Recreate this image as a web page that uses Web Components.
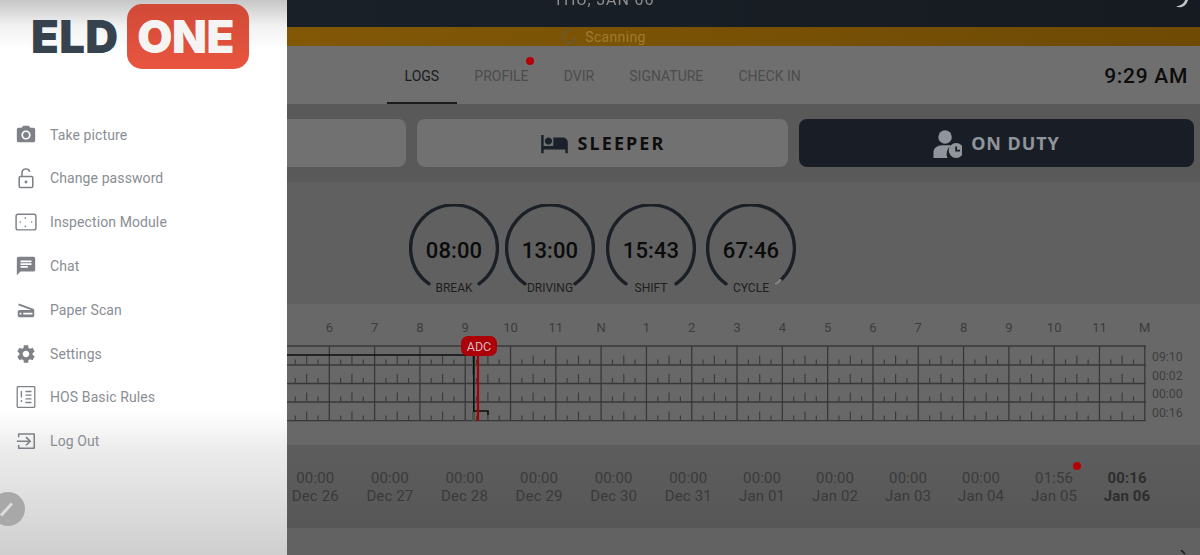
<!DOCTYPE html>
<html><head><meta charset="utf-8">
<style>
html,body{margin:0;padding:0;width:1200px;height:555px;overflow:hidden;background:#666;font-family:Roboto,"Liberation Sans",sans-serif}
eld-app{width:1200px;height:555px}
</style></head><body>
<eld-app>
  <eld-drawer slot="drawer">
    <eld-item label="Take picture" icon="camera"></eld-item>
    <eld-item label="Change password" icon="lock"></eld-item>
    <eld-item label="Inspection Module" icon="inspect"></eld-item>
    <eld-item label="Chat" icon="chat"></eld-item>
    <eld-item label="Paper Scan" icon="scan"></eld-item>
    <eld-item label="Settings" icon="gear"></eld-item>
    <eld-item label="HOS Basic Rules" icon="rules"></eld-item>
    <eld-item label="Log Out" icon="logout"></eld-item>
  </eld-drawer>
  <eld-status></eld-status>
  <eld-tabs time="9:29 AM">
    <eld-tab active>LOGS</eld-tab>
    <eld-tab dot>PROFILE</eld-tab>
    <eld-tab>DVIR</eld-tab>
    <eld-tab>SIGNATURE</eld-tab>
    <eld-tab>CHECK IN</eld-tab>
  </eld-tabs>
  <eld-duties>
    <eld-duty w="119"></eld-duty>
    <eld-duty w="371" icon="bed">SLEEPER</eld-duty>
    <eld-duty w="395" icon="duty" dark>ON DUTY</eld-duty>
  </eld-duties>
  <eld-gauges>
    <eld-gauge time="08:00" label="BREAK" style="margin-left:122px"></eld-gauge>
    <eld-gauge time="13:00" label="DRIVING" style="margin-left:6px"></eld-gauge>
    <eld-gauge time="15:43" label="SHIFT" style="margin-left:11px"></eld-gauge>
    <eld-gauge time="67:46" label="CYCLE" style="margin-left:10px" fade></eld-gauge>
  </eld-gauges>
  <eld-chart></eld-chart>
  <eld-dates>
    <eld-date w="74.6" t="00:00" d="Dec 26"></eld-date>
    <eld-date w="74.6" t="00:00" d="Dec 27"></eld-date>
    <eld-date w="74.6" t="00:00" d="Dec 28"></eld-date>
    <eld-date w="74.6" t="00:00" d="Dec 29"></eld-date>
    <eld-date w="74.6" t="00:00" d="Dec 30"></eld-date>
    <eld-date w="74.6" t="00:00" d="Dec 31"></eld-date>
    <eld-date w="73" t="00:00" d="Jan 01"></eld-date>
    <eld-date w="73" t="00:00" d="Jan 02"></eld-date>
    <eld-date w="73" t="00:00" d="Jan 03"></eld-date>
    <eld-date w="73" t="00:00" d="Jan 04"></eld-date>
    <eld-date w="73" t="01:56" d="Jan 05" dot></eld-date>
    <eld-date w="73" t="00:16" d="Jan 06" bold></eld-date>
  </eld-dates>
  <eld-foot></eld-foot>
</eld-app>
<script>
const ICONS={
camera:'<path fill="currentColor" d="M9 2L7.17 4H4c-1.1 0-2 .9-2 2v12c0 1.1.9 2 2 2h16c1.1 0 2-.9 2-2V6c0-1.1-.9-2-2-2h-3.17L15 2H9zm3 15c-2.76 0-5-2.24-5-5s2.24-5 5-5 5 2.24 5 5-2.24 5-5 5z"/><circle fill="currentColor" cx="12" cy="12" r="3.2"/>',
lock:'<g fill="none" stroke="currentColor" stroke-width="1.7"><rect x="4.6" y="10.4" width="14.8" height="12" rx="1.4"/><path d="M7.6 10.2V6.400a4.400 4.400 0 0 1 8.600-1.200"/></g><circle fill="currentColor" cx="12" cy="16.4" r="1.6"/>',
inspect:'<rect x="1.2" y="3.6" width="21.6" height="17" rx="2" fill="none" stroke="currentColor" stroke-width="1.6"/><g fill="currentColor"><circle cx="5.8" cy="12" r=".9"/><circle cx="11.3" cy="7.8" r=".9"/><circle cx="18.2" cy="12" r=".9"/><circle cx="11.3" cy="16.8" r=".9"/></g>',
chat:'<path fill="currentColor" d="M20 2H4c-1.1 0-1.99.9-1.99 2L2 22l4-4h14c1.1 0 2-.9 2-2V4c0-1.1-.9-2-2-2zM6 9h12v2H6V9zm8 5H6v-2h8v2zm4-6H6V6h12v2z"/>',
scan:'<path fill="currentColor" d="M19.8 10.7L4.2 5l-.7 1.9L17.6 12H5c-1.1 0-2 .9-2 2v4c0 1.1.9 2 2 2h14c1.1 0 2-.9 2-2v-5.5c0-.8-.5-1.6-1.2-1.8zM7 17H5v-2h2v2zm12 0H9v-2h10v2z"/>',
gear:'<path fill="currentColor" d="M19.14 12.94c.04-.3.06-.61.06-.94 0-.32-.02-.64-.07-.94l2.03-1.58c.18-.14.23-.41.12-.61l-1.92-3.32c-.12-.22-.37-.29-.59-.22l-2.39.96c-.5-.38-1.03-.7-1.62-.94l-.36-2.54c-.04-.24-.24-.41-.48-.41h-3.84c-.24 0-.43.17-.47.41l-.36 2.54c-.59.24-1.13.57-1.62.94l-2.39-.96c-.22-.08-.47 0-.59.22L2.74 8.87c-.12.21-.08.47.12.61l2.03 1.58c-.05.3-.09.63-.09.94s.02.64.07.94l-2.03 1.58c-.18.14-.23.41-.12.61l1.92 3.32c.12.22.37.29.59.22l2.39-.96c.5.38 1.03.7 1.62.94l.36 2.54c.05.24.24.41.48.41h3.84c.24 0 .44-.17.47-.41l.36-2.54c.59-.24 1.13-.56 1.62-.94l2.39.96c.22.08.47 0 .59-.22l1.92-3.32c.12-.22.07-.47-.12-.61l-2.01-1.58zM12 15.6c-1.98 0-3.6-1.62-3.6-3.6s1.62-3.6 3.6-3.6 3.6 1.62 3.6 3.6-1.62 3.6-3.6 3.6z"/>',
rules:'<rect x="2.4" y=".6" width="19.2" height="22.8" rx="1.4" fill="none" stroke="currentColor" stroke-width="1.4"/><path d="M7 5.500v7M7 15.400v2M11.400 6h6.600M11.400 10h6.600M11.400 14h6.600M11.400 18h6.600" fill="none" stroke="currentColor" stroke-width="1.5"/>',
logout:'<path d="M4 8V4.400h17v15.600H4v-3.600" fill="none" stroke="currentColor" stroke-width="1.7" stroke-linejoin="round"/><path d="M2 12.200h14M12 7.800l4.600 4.400-4.600 4.400" fill="none" stroke="currentColor" stroke-width="1.7"/>',
bed:'<path fill="currentColor" d="M7 13c1.66 0 3-1.34 3-3S8.66 7 7 7s-3 1.34-3 3 1.34 3 3 3zm12-6h-8v7H3V5H1v15h2v-3h18v3h2v-9c0-2.21-1.79-4-4-4z"/>',
duty:'<g fill="currentColor"><circle cx="10" cy="6.600" r="5.600"/><path d="M.4 24v-4.600c0-3.600 3-6 7.400-6h5c.9 0 1.700.1 2.400.3A8 8 0 0 0 12 24z"/><path fill-rule="evenodd" d="M19.200 11.600a6.200 6.200 0 1 1 0 12.400 6.200 6.200 0 0 1 0-12.400zm-.8 2.800v4.200h4v-1.400h-2.500v-2.800z"/></g>'
};
function def(name,css,html,init){
  customElements.define(name,class extends HTMLElement{
    constructor(){super();this.attachShadow({mode:'open'})}
    connectedCallback(){
      const h=typeof html==='function'?html(this):html;
      this.shadowRoot.innerHTML='<style>'+css+'</style>'+h;
      if(init)init(this);
    }
  });
}
def('eld-app',`:host{display:flex;position:relative;overflow:hidden;filter:blur(.45px)}
.main{flex:1;min-width:0;display:flex;flex-direction:column}
.side{flex:none;width:287px;display:flex}`,
`<div class="side"><slot name="drawer"></slot></div><div class="main"><slot></slot></div>`);

def('eld-drawer',`:host{display:flex;flex-direction:column;width:287px;height:555px;position:relative;
 background:linear-gradient(180deg,#c6c6c6 0,#f2f2f2 26px,#fff 50px,#fff 410px,#ececec 450px,#cfcfcf 555px);color:#8f9399}
.logo{height:112.700px;flex:none;display:flex;align-items:flex-start;font-family:Inter,"Liberation Sans",sans-serif;font-weight:900;font-size:45.500px;line-height:1}
.eld{margin:14px 0 0 31px;width:96px;color:#36434e;letter-spacing:.3px}
.one{margin-top:4px;width:122px;height:65px;box-sizing:border-box;padding-right:5px;border-radius:15px;background:linear-gradient(180deg,#d04a37,#e9553f);color:#f6f4f2;text-align:center;line-height:65px;letter-spacing:-.6px}
.fab{position:absolute;left:-9px;top:492px;width:34px;height:34px;border-radius:50%;background:#a8a8a8}
svg{display:block}`,
`<div class="logo"><div class="eld">ELD</div><div class="one">ONE</div></div><slot></slot>
<div class="fab"><svg width="34" height="34" viewBox="0 0 34 34"><path d="M10 23.500L21 11.500" stroke="#dcdcdc" stroke-width="3" fill="none"/></svg></div>`);

def('eld-item',`:host{display:flex;align-items:center;height:43.800px;flex:none;font-size:14px;letter-spacing:.1px;color:#8a8e94}
.ic{width:22px;height:22px;margin-left:15px;margin-right:13px;flex:none;color:#7e8288}
svg{display:block;width:22px;height:22px}`,
el=>`<div class="ic"><svg viewBox="0 0 24 24">${ICONS[el.getAttribute('icon')]}</svg></div><span>${el.getAttribute('label')}</span>`);

def('eld-status',`:host{display:block;flex:none}
.top{height:27px;box-sizing:border-box;padding-right:279px;background:linear-gradient(90deg,#1a2028,#161b21);overflow:hidden;display:flex;justify-content:center;align-items:flex-end;position:relative}
.top span{color:#8c8c8c;font-size:16px;line-height:16px;margin-bottom:19px;letter-spacing:.9px}
.moon{position:absolute;right:12px;top:0}
.amber{height:19px;box-sizing:border-box;padding-right:279px;background:linear-gradient(90deg,#825807,#6e4a04);display:flex;align-items:center;justify-content:center;color:#a07a30;font-size:14px;letter-spacing:.35px}
.amber div{display:flex;align-items:center;gap:9px}
svg{display:block}`,
`<div class="top"><span>THU, JAN 06</span><svg class="moon" width="16" height="10" viewBox="0 0 16 10"><path d="M13 0c-.5 3-3.500 5.500-9 6.500 5 2 10 0 12-6.500z" fill="#c4c4c4"/></svg></div>
<div class="amber"><div><svg width="14" height="14" viewBox="0 0 14 14"><path d="M8 1.200A6 6 0 1 0 13 7" fill="none" stroke="#6b5a32" stroke-width="1.800"/></svg><span>Scanning</span></div></div>`);

def('eld-tabs',`:host{display:flex;flex:none;height:58px;background:#6f6f6f;padding-left:100px;align-items:stretch}
.t{margin-left:auto;align-self:center;font-size:21px;font-weight:500;color:#0c0c0c;margin-right:12px;letter-spacing:.7px;margin-top:2px}`,
el=>`<slot></slot><div class="t">${el.getAttribute('time')}</div>`);

def('eld-tab',`:host{display:flex;position:relative;align-items:center;box-sizing:border-box;height:58px;padding:2px 17.600px 0;font-size:14px;color:#4c4c4c}
:host([active]){color:#1c1c1c;box-shadow:inset 0 -2px 0 #1a1a1a}
.dot{position:absolute;right:12px;top:11px;width:8px;height:8px;border-radius:50%;background:#b50006}`,
el=>`<slot></slot>${el.hasAttribute('dot')?'<div class="dot"></div>':''}`);

def('eld-duties',`:host{display:flex;flex:none;height:78px;background:#595959;box-sizing:border-box;padding-top:15px;gap:11px;align-items:flex-start}`,`<slot></slot>`);

def('eld-duty',`:host{display:flex;flex:none;height:48px;align-items:center;justify-content:center;gap:9px;border-radius:8px;background:#717171;color:#0e0e0e;font-family:"Noto Sans",Roboto,sans-serif;font-weight:700;font-size:18px;letter-spacing:2.1px;box-sizing:border-box}
:host([dark]){background:#191e26;color:#90949b;letter-spacing:.95px}
:host([w="119"]){border-radius:0 8px 8px 0}
svg{display:block;width:29px;height:29px}`,
el=>{el.style.width=el.getAttribute('w')+'px';const i=el.getAttribute('icon');return (i?`<svg viewBox="0 0 24 24" style="${i=='duty'?'color:#90949b':'color:#1b212a'}">${ICONS[i]}</svg>`:'')+'<slot></slot>'});

def('eld-gauges',`:host{display:flex;flex:none;height:122px;background:#606060;align-items:flex-start;box-sizing:border-box;padding-top:22px}`,`<slot></slot>`);

def('eld-gauge',`:host{display:grid;width:90px;height:92px;flex:none;position:relative}
svg{grid-area:1/1;display:block}
.v{grid-area:1/1;display:flex;flex-direction:column;align-items:center;color:#0b0b0b}
.time{font-size:22px;font-weight:500;line-height:26px;margin-top:34px;letter-spacing:.1px}
.lab{font-size:12px;line-height:14px;margin-top:17px;color:#1e1e1e}`,
el=>`<svg width="90" height="92" viewBox="0 0 90 92"><path d="M20 79.800A43.400 43.400 0 1 1 70 79.800" fill="none" stroke="#1b2027" stroke-width="3.400" stroke-linecap="round"/>${el.hasAttribute('fade')?'<path d="M74 76.500A43.400 43.400 0 0 1 70 79.800" fill="none" stroke="#7b7b7b" stroke-width="3.400" stroke-linecap="round"/>':''}</svg><div class="v"><div class="time">${el.getAttribute('time')}</div><div class="lab">${el.getAttribute('label')}</div></div>`);

def('eld-chart',`:host{display:block;flex:none;height:141px;background:#686868}svg{display:block}text{font-family:Roboto,"Liberation Sans",sans-serif}`,
()=>{
 const L=['6','7','8','9','10','11','N','1','2','3','4','5','6','7','8','9','10','11','M'];
 const s=45.305,x0=329.3;let g='',t='',ticks='';
 L.forEach((l,i)=>{const x=x0+s*i;t+=`<text x="${x}" y="331.500" text-anchor="middle" font-size="13" fill="#3c3c3c">${l}</text>`;
   g+=`<path d="M${x} 346V421"/>`;});
 g+=`<path d="M284 346V421"/>`;
 [346,365,383.500,402,420.700].forEach(y=>g+=`<path d="M287 ${y}H1146"/>`);
 for(let r=0;r<4;r++){const b=[364.500,383,401.500,420.500][r];
  for(let i=-1;i<18;i++){const x=x0+s*i;[[.25,5],[.5,9],[.75,5]].forEach(([f,h])=>{ticks+=`<path d="M${x+s*f} ${b}v-${h}"/>`;});}}
 const R=[['09:10',360.500],['00:02',379.500],['00:00',398],['00:16',416.500]].map(([v,y])=>`<text x="1152" y="${y}" font-size="12.300" fill="#3f3f3f">${v}</text>`).join('');
 return `<svg width="913" height="141" viewBox="287 304 913 141">
 ${t}<g stroke="#383838" stroke-width="1.300" fill="none">${g}</g><g stroke="#3c3c3c" stroke-width="1.200" fill="none">${ticks}</g>
 <path d="M473.500 355V375M473.500 411V421" stroke="#4b5348" stroke-width="3"/>
 <path d="M287 355H473.800V411H488V415" fill="none" stroke="#0e0e12" stroke-width="1.600"/>
 <path d="M478 350V421" stroke="#a80008" stroke-width="2.200"/>
 <rect x="461" y="336" width="36" height="20" rx="7" fill="#ad0008"/>
 <text x="479" y="351" text-anchor="middle" font-size="12.500" fill="#d0bcbc">ADC</text>
 ${R}</svg>`});

def('eld-dates',`:host{display:flex;flex:none;height:83px;background:linear-gradient(180deg,#5d5d5d,#575757);overflow:hidden;padding-top:24px;box-sizing:border-box}
.in{display:flex;margin-left:-9px}`,`<div class="in"><slot></slot></div>`);

def('eld-date',`:host{display:flex;flex-direction:column;align-items:center;flex:none;position:relative;font-size:15px;line-height:18px;color:#3a3a3a;letter-spacing:.12px;height:40px}
:host([bold]){font-weight:700;color:#2e2e2e}
.dot{position:absolute;left:55px;top:-7px;width:8px;height:8px;border-radius:50%;background:#b50006}`,
el=>{el.style.width=el.getAttribute('w')+'px';return `<div>${el.getAttribute('t')}</div><div>${el.getAttribute('d')}</div>${el.hasAttribute('dot')?'<div class="dot"></div>':''}`});

def('eld-foot',`:host{display:flex;flex:1;background:#626262;justify-content:flex-end;align-items:flex-end;overflow:hidden;padding-right:14px}svg{display:block}`,
`<svg width="6" height="5" viewBox="0 0 6 5"><path d="M1 0l4 4" stroke="#1c1c1c" stroke-width="1.600" fill="none"/></svg>`);
</script>
</body></html>
